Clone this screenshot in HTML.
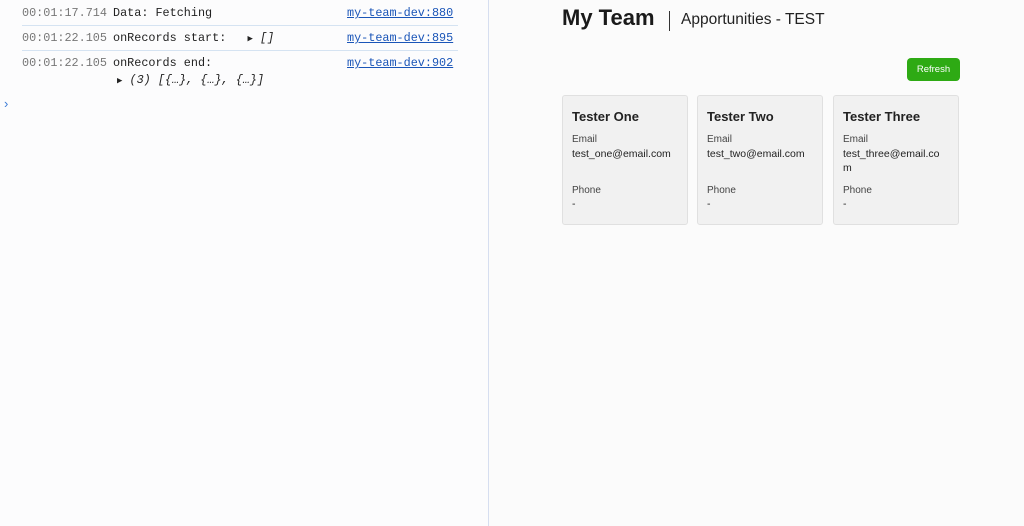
<!DOCTYPE html>
<html><head><meta charset="utf-8"><style>
*{margin:0;padding:0;box-sizing:border-box}
body{width:1024px;height:526px;overflow:hidden;background:#fbfbfb;position:relative;font-family:"Liberation Sans",sans-serif}
#left{position:absolute;left:0;top:0;width:489px;height:526px;background:#fcfcfd;border-right:1px solid #d6def0}
.row{position:absolute;left:0;width:472px;font-family:"Liberation Mono",monospace;font-size:11.8px;color:#222}
.ts{position:absolute;left:22px;color:#777}
.msg{position:absolute;left:113px}
.lnk{position:absolute;left:347px;color:#1a55b8;text-decoration:underline}
.sep{position:absolute;left:22px;width:436px;height:1px;background:#d5e3f2}
.tri{font-size:9px;font-style:normal}
i{font-style:italic}
#right{position:absolute;left:490px;top:0;width:534px;height:526px;background:#fbfbfb}
h1{position:absolute;left:562px;top:5px;font-size:22px;font-weight:bold;color:#1a1a1a}
.bar{position:absolute;left:669px;top:11px;width:1px;height:20px;background:#333}
.sub{position:absolute;left:681px;top:11px;font-size:15.5px;color:#222}
.btn{position:absolute;left:907px;top:58px;width:53px;height:23px;background:#2eaa14;border-radius:4px;color:#fff;font-size:9.5px;text-align:center;line-height:23px}
.card{position:absolute;top:95px;width:126px;height:130px;background:#f1f1f1;border:1px solid #e0e0e0;border-radius:3px;color:#222}
.card .n{position:absolute;left:9px;top:13px;font-size:13px;font-weight:bold}
.card .l{position:absolute;left:9px;font-size:10px;color:#444}
.card .v{position:absolute;left:9px;font-size:10.5px;width:112px;line-height:14px;word-break:break-all}
</style></head><body>
<div id="left">
 <div class="row" style="top:6px"><span class="ts">00:01:17.714</span><span class="msg">Data: Fetching</span><span class="lnk">my-team-dev:880</span></div>
 <div class="sep" style="top:25px"></div>
 <div class="row" style="top:31px"><span class="ts">00:01:22.105</span><span class="msg">onRecords start:&nbsp;&nbsp;&nbsp;<span class="tri">▶</span> <i>[]</i></span><span class="lnk">my-team-dev:895</span></div>
 <div class="sep" style="top:50px"></div>
 <div class="row" style="top:56px"><span class="ts">00:01:22.105</span><span class="msg">onRecords end:</span><span class="lnk">my-team-dev:902</span></div>
 <div class="row" style="top:73px"><span class="msg" style="left:117px"><span class="tri">▶</span> <i>(3) [{…}, {…}, {…}]</i></span></div>
 <div style="position:absolute;left:4px;top:96px;color:#3b7bd6;font-size:13px">›</div>
</div>
<div id="right"></div>
<h1>My Team</h1><div class="bar"></div><div class="sub">Apportunities - TEST</div>
<div class="btn">Refresh</div>
<div class="card" style="left:562px"><div class="n">Tester One</div><div class="l" style="top:38px">Email</div><div class="v" style="top:51px">test_one@email.com</div><div class="l" style="top:89px">Phone</div><div class="v" style="top:101px">-</div></div>
<div class="card" style="left:697px"><div class="n">Tester Two</div><div class="l" style="top:38px">Email</div><div class="v" style="top:51px">test_two@email.com</div><div class="l" style="top:89px">Phone</div><div class="v" style="top:101px">-</div></div>
<div class="card" style="left:833px"><div class="n">Tester Three</div><div class="l" style="top:38px">Email</div><div class="v" style="top:51px;width:98px">test_three@email.com</div><div class="l" style="top:89px">Phone</div><div class="v" style="top:101px">-</div></div>
</body></html>
